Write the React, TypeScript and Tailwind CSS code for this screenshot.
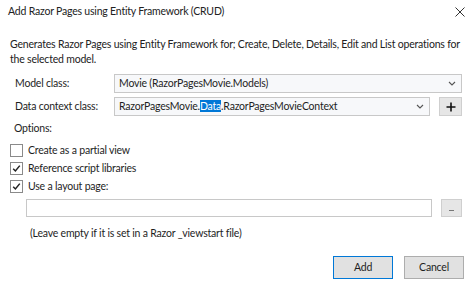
import React from 'react';

const font = { fontFamily: 'Lato, "Noto Sans", sans-serif' };

function Chevron() {
  return (
    <svg width="8" height="5" viewBox="0 0 8 5" className="text-[#555]">
      <path d="M1 1 L4 4 L7 1" fill="none" stroke="currentColor" strokeWidth="1.1" />
    </svg>
  );
}

function Check({ checked }: { checked: boolean }) {
  return (
    <div className="w-[13px] h-[13px] border border-[#8a8a8a] bg-white flex items-center justify-center">
      {checked && (
        <svg width="9" height="9" viewBox="0 0 9 9">
          <path d="M1.2 4.8 L3.4 7 L7.8 1.6" fill="none" stroke="#222" strokeWidth="1.5" />
        </svg>
      )}
    </div>
  );
}

export default function App() {
  return (
    <div
      className="w-[474px] h-[285px] bg-white text-[#1e1e1e] overflow-hidden flex flex-col text-[10.5px] tracking-[-0.2px]"
      style={font}
    >
      {/* Title bar */}
      <div className="h-[24px] flex items-center justify-between pl-[8px] pr-[9px]">
        <span className="text-[#222]">Add Razor Pages using Entity Framework (CRUD)</span>
        <svg width="10" height="10" viewBox="0 0 10 10">
          <path d="M0.5 0.5 L9.5 9.5 M9.5 0.5 L0.5 9.5" stroke="#333" strokeWidth="1" />
        </svg>
      </div>

      <div className="flex flex-col pl-[10px] pr-[12px]">
        <p className="mt-[13px] leading-[15px] text-[#222] whitespace-nowrap">
          Generates Razor Pages using Entity Framework for; Create, Delete, Details, Edit and List operations for
          <br />
          the selected model.
        </p>

        {/* Model class */}
        <div className="mt-[7px] flex items-center h-[19px]">
          <span className="w-[104px] pl-[5px] whitespace-nowrap">Model class:</span>
          <div className="flex-1 h-full border border-[#c8c8c8] bg-[#f7f8fa] flex items-center justify-between pl-[4px] pr-[5px]">
            <span>Movie (RazorPagesMovie.Models)</span>
            <Chevron />
          </div>
        </div>

        {/* Data context class */}
        <div className="mt-[4px] flex items-center h-[19px]">
          <span className="w-[104px] pl-[5px] whitespace-nowrap">Data context class:</span>
          <div className="w-[316px] h-full border border-[#c8c8c8] bg-[#f7f8fa] flex items-center justify-between pl-[4px] pr-[5px]">
            <span className="whitespace-nowrap">
              RazorPagesMovie.<span className="bg-[#0078d7] text-white">Data</span>.RazorPagesMovieContext
            </span>
            <Chevron />
          </div>
          <div className="ml-[9px] w-[23px] h-full border border-[#cfcfcf] bg-[#e6e6e6] flex items-center justify-center">
            <svg width="10" height="10" viewBox="0 0 10 10">
              <path d="M5 0.5 V9.5 M0.5 5 H9.5" stroke="#111" strokeWidth="1.6" />
            </svg>
          </div>
        </div>

        <span className="mt-[4px] pl-[4px] leading-[16px]">Options:</span>

        <div className="mt-[8px] flex flex-col gap-[5px]">
          <label className="flex items-center gap-[5px] h-[13px]">
            <Check checked={false} />
            <span>Create as a partial view</span>
          </label>
          <label className="flex items-center gap-[5px] h-[13px]">
            <Check checked={true} />
            <span>Reference script libraries</span>
          </label>
          <label className="flex items-center gap-[5px] h-[13px]">
            <Check checked={true} />
            <span>Use a layout page:</span>
          </label>
        </div>

        <div className="mt-[6px] flex items-center h-[18px] pl-[16px]">
          <div className="w-[406px] h-full border border-[#c8c8c8] bg-white" />
          <div className="ml-[9px] w-[21px] h-full border border-[#cfcfcf] bg-[#e6e6e6] flex items-end justify-center pb-[5px]">
            <div className="w-[5px] h-px bg-[#777]" />
          </div>
        </div>

        <span className="mt-[9px] pl-[20px] leading-[15px]">
          (Leave empty if it is set in a Razor _viewstart file)
        </span>

        <div className="mt-[15px] flex justify-end gap-[11px] mr-[-2px]">
          <button className="w-[60px] h-[23px] border border-[#0078d7] bg-[#e1e1e1]">Add</button>
          <button className="w-[60px] h-[23px] border border-[#adadad] bg-[#e1e1e1]">Cancel</button>
        </div>
      </div>
    </div>
  );
}
